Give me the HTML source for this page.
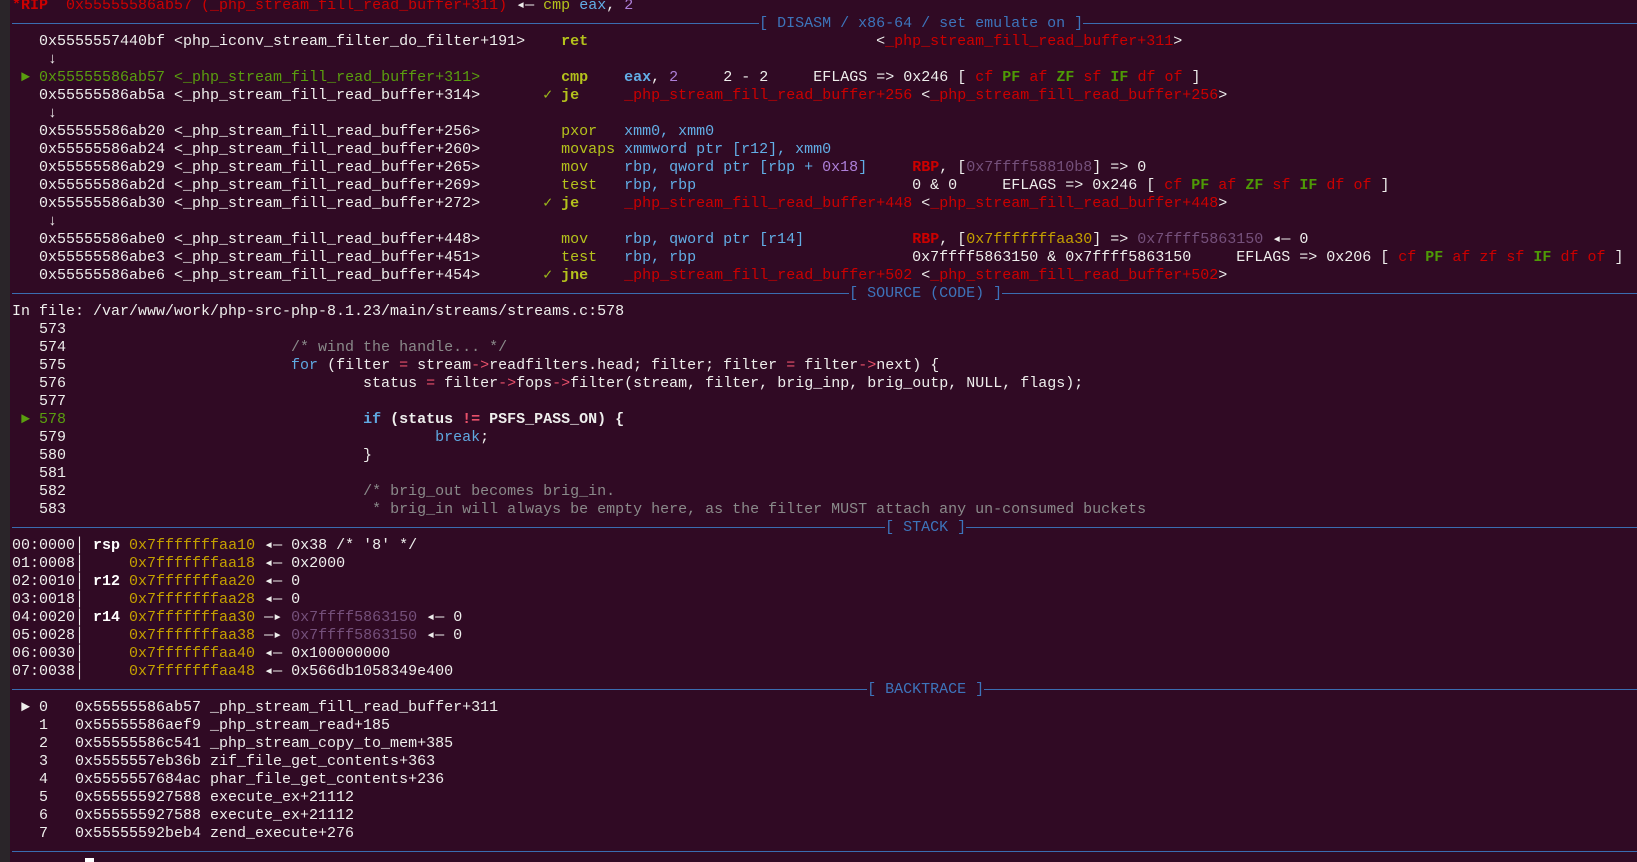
<!DOCTYPE html>
<html><head><meta charset="utf-8"><style>
html,body{margin:0;padding:0;background:#300a24;width:1637px;height:862px;overflow:hidden;position:relative}
.strip{position:absolute;left:0;top:0;width:10px;height:862px;background:#2a2529}
.ln{position:absolute;left:12px;right:0;height:1px;background:#3a6cb0}
pre{position:absolute;left:12px;top:-3px;margin:0;font-family:"Liberation Mono","DejaVu Sans Mono",monospace;font-size:15px;line-height:18px;color:#eeeeec;z-index:2}
.t{background:#300a24;color:#3d74bb}
.r{color:#cc0000}.g{color:#5a9e0f}.y{color:#b4c21c;font-weight:bold}.b{color:#62aee6}.p{color:#ad7fd8}
.d{color:#75507b}.a{color:#c4a000}.c{color:#8a8a8a}.k{color:#5fa8e0}.o{color:#e8506a}.gb{color:#4e9a06;font-weight:bold}
.w{font-weight:bold;color:#fff}.ck{color:#9cb81a;font-weight:bold}
.cur{position:absolute;left:85px;top:858px;width:9px;height:4px;background:#fff}
</style></head><body>
<div class="strip"></div>
<div class="ln" style="top:23px"></div>
<div class="ln" style="top:293px"></div>
<div class="ln" style="top:527px"></div>
<div class="ln" style="top:689px"></div>
<div class="ln" style="top:851px"></div>
<div class="cur"></div>
<pre><span class="r" style="font-weight:bold">*RIP</span>  <span class="r">0x55555586ab57 (_php_stream_fill_read_buffer+311)</span> ◂— <span class="y" style="font-weight:normal">cmp</span> <span class="b">eax</span>, <span class="p">2</span>
                                                                                   <span class="t">[ DISASM / x86-64 / set emulate on ]</span>
   0x5555557440bf &lt;php_iconv_stream_filter_do_filter+191&gt;    <span class="y">ret</span>                                &lt;<span class="r">_php_stream_fill_read_buffer+311</span>&gt;
    ↓
 <span class="g">► 0x55555586ab57 &lt;_php_stream_fill_read_buffer+311&gt;</span>         <span class="y">cmp</span>    <b class="b">eax</b>, <span class="p">2</span>     2 - 2     EFLAGS =&gt; 0x246 [ <span class="r">cf</span> <span class="gb">PF</span> <span class="r">af</span> <span class="gb">ZF</span> <span class="r">sf</span> <span class="gb">IF</span> <span class="r">df</span> <span class="r">of</span> ]
   0x55555586ab5a &lt;_php_stream_fill_read_buffer+314&gt;       <span class="ck">✓</span> <span class="y">je</span>     <span class="r">_php_stream_fill_read_buffer+256</span> &lt;<span class="r">_php_stream_fill_read_buffer+256</span>&gt;
    ↓
   0x55555586ab20 &lt;_php_stream_fill_read_buffer+256&gt;         <span class="y" style="font-weight:normal">pxor</span>   <span class="b">xmm0, xmm0</span>
   0x55555586ab24 &lt;_php_stream_fill_read_buffer+260&gt;         <span class="y" style="font-weight:normal">movaps</span> <span class="b">xmmword ptr [r12], xmm0</span>
   0x55555586ab29 &lt;_php_stream_fill_read_buffer+265&gt;         <span class="y" style="font-weight:normal">mov</span>    <span class="b">rbp, qword ptr [rbp + </span><span class="p">0x18</span><span class="b">]</span>     <b class="r">RBP</b>, [<span class="d">0x7ffff58810b8</span>] =&gt; 0
   0x55555586ab2d &lt;_php_stream_fill_read_buffer+269&gt;         <span class="y" style="font-weight:normal">test</span>   <span class="b">rbp, rbp</span>                        0 &amp; 0     EFLAGS =&gt; 0x246 [ <span class="r">cf</span> <span class="gb">PF</span> <span class="r">af</span> <span class="gb">ZF</span> <span class="r">sf</span> <span class="gb">IF</span> <span class="r">df</span> <span class="r">of</span> ]
   0x55555586ab30 &lt;_php_stream_fill_read_buffer+272&gt;       <span class="ck">✓</span> <span class="y">je</span>     <span class="r">_php_stream_fill_read_buffer+448</span> &lt;<span class="r">_php_stream_fill_read_buffer+448</span>&gt;
    ↓
   0x55555586abe0 &lt;_php_stream_fill_read_buffer+448&gt;         <span class="y" style="font-weight:normal">mov</span>    <span class="b">rbp, qword ptr [r14]</span>            <b class="r">RBP</b>, [<span class="a">0x7fffffffaa30</span>] =&gt; <span class="d">0x7ffff5863150</span> ◂— 0
   0x55555586abe3 &lt;_php_stream_fill_read_buffer+451&gt;         <span class="y" style="font-weight:normal">test</span>   <span class="b">rbp, rbp</span>                        0x7ffff5863150 &amp; 0x7ffff5863150     EFLAGS =&gt; 0x206 [ <span class="r">cf</span> <span class="gb">PF</span> <span class="r">af</span> <span class="r">zf</span> <span class="r">sf</span> <span class="gb">IF</span> <span class="r">df</span> <span class="r">of</span> ]
   0x55555586abe6 &lt;_php_stream_fill_read_buffer+454&gt;       <span class="ck">✓</span> <span class="y">jne</span>    <span class="r">_php_stream_fill_read_buffer+502</span> &lt;<span class="r">_php_stream_fill_read_buffer+502</span>&gt;
                                                                                             <span class="t">[ SOURCE (CODE) ]</span>
In file: /var/www/work/php-src-php-8.1.23/main/streams/streams.c:578
   573
   574                         <span class="c">/* wind the handle... */</span>
   575                         <span class="k">for</span> (filter <span class="o">=</span> stream<span class="o">-&gt;</span>readfilters.head; filter; filter <span class="o">=</span> filter<span class="o">-&gt;</span>next) {
   576                                 status <span class="o">=</span> filter<span class="o">-&gt;</span>fops<span class="o">-&gt;</span>filter(stream, filter, brig_inp, brig_outp, NULL, flags);
   577
 <span class="g">► 578</span>                                 <b><span class="k">if</span> (status <span class="o">!=</span> PSFS_PASS_ON) {</b>
   579                                         <span class="k">break</span>;
   580                                 }
   581
   582                                 <span class="c">/* brig_out becomes brig_in.</span>
   583                                  <span class="c">* brig_in will always be empty here, as the filter MUST attach any un-consumed buckets</span>
                                                                                                 <span class="t">[ STACK ]</span>
00:0000│ <span class="w">rsp</span> <span class="a">0x7fffffffaa10</span> ◂— 0x38 /* '8' */
01:0008│     <span class="a">0x7fffffffaa18</span> ◂— 0x2000
02:0010│ <span class="w">r12</span> <span class="a">0x7fffffffaa20</span> ◂— 0
03:0018│     <span class="a">0x7fffffffaa28</span> ◂— 0
04:0020│ <span class="w">r14</span> <span class="a">0x7fffffffaa30</span> —▸ <span class="d">0x7ffff5863150</span> ◂— 0
05:0028│     <span class="a">0x7fffffffaa38</span> —▸ <span class="d">0x7ffff5863150</span> ◂— 0
06:0030│     <span class="a">0x7fffffffaa40</span> ◂— 0x100000000
07:0038│     <span class="a">0x7fffffffaa48</span> ◂— 0x566db1058349e400
                                                                                               <span class="t">[ BACKTRACE ]</span>
 ► 0   0x55555586ab57 _php_stream_fill_read_buffer+311
   1   0x55555586aef9 _php_stream_read+185
   2   0x55555586c541 _php_stream_copy_to_mem+385
   3   0x5555557eb36b zif_file_get_contents+363
   4   0x5555557684ac phar_file_get_contents+236
   5   0x555555927588 execute_ex+21112
   6   0x555555927588 execute_ex+21112
   7   0x55555592beb4 zend_execute+276
</pre>
</body></html>
